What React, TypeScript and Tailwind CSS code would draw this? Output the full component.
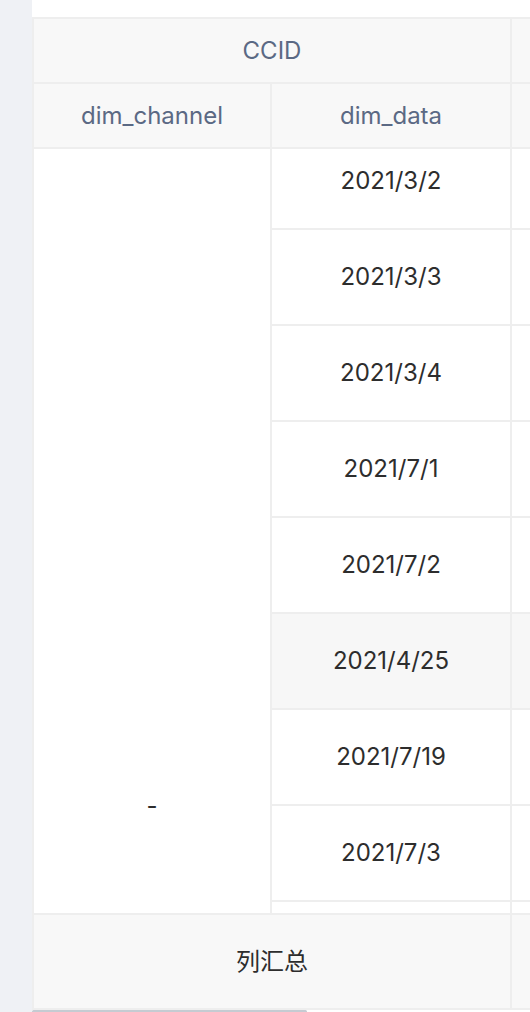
const dates = [
  "",
  "2021/3/2",
  "2021/3/3",
  "2021/3/4",
  "2021/7/1",
  "2021/7/2",
  "2021/4/25",
  "2021/7/19",
  "2021/7/3",
  "",
];

const hovered = "2021/4/25";

export default function App() {
  return (
    <div className="flex h-[1012px] w-[530px] overflow-hidden bg-white font-['Inter','Noto_Sans_CJK_SC',sans-serif] text-[24px]">
      <div className="w-[32px] shrink-0 bg-[#eff1f5]" />
      <div className="min-w-0 flex-1 overflow-hidden pt-[17px]">
        <div className="w-[720px] border-l-2 border-t-2 border-[#eeeeee]">
          {/* header */}
          <div className="flex h-[65px] border-b-2 border-[#eeeeee] bg-[#f8f8f8] text-[#5b6984]">
            <div className="flex w-[478px] items-center justify-center border-r-2 border-[#eeeeee]">CCID</div>
            <div className="w-[240px] border-r-2 border-[#eeeeee]" />
          </div>
          <div className="flex h-[65px] border-b-2 border-[#eeeeee] bg-[#f8f8f8] text-[#5b6984]">
            <div className="flex w-[238px] items-center justify-center border-r-2 border-[#eeeeee]">dim_channel</div>
            <div className="flex w-[240px] items-center justify-center border-r-2 border-[#eeeeee]">dim_data</div>
            <div className="w-[240px] border-r-2 border-[#eeeeee]" />
          </div>

          {/* body, scrolled a little */}
          <div className="h-[764px] overflow-hidden">
            <div className="-mt-[111px] flex text-[#2d2d2d]">
              <div className="flex h-[1536px] w-[238px] shrink-0 items-center justify-center border-r-2 border-[#eeeeee] bg-white">
                -
              </div>
              <div className="flex flex-col">
                {dates.map((d, i) => (
                  <div
                    key={i}
                    className={
                      d === hovered
                        ? "flex h-[96px] border-b-2 border-[#eeeeee] bg-[#f7f7f7]"
                        : "flex h-[96px] border-b-2 border-[#eeeeee] bg-white"
                    }
                  >
                    <div className="flex w-[240px] items-center justify-center border-r-2 border-[#eeeeee]">{d}</div>
                    <div className="w-[240px] border-r-2 border-[#eeeeee]" />
                  </div>
                ))}
              </div>
            </div>
          </div>

          {/* column totals */}
          <div className="flex h-[97px] border-y-2 border-[#eeeeee] bg-[#f8f8f8] text-[#2d2d2d]">
            <div className="flex w-[478px] items-center justify-center border-r-2 border-[#eeeeee]">列汇总</div>
            <div className="w-[240px] border-r-2 border-[#eeeeee]" />
          </div>
        </div>
        <div className="h-[3px] w-[275px] rounded-full bg-[#c5cbd2]" />
      </div>
    </div>
  );
}
